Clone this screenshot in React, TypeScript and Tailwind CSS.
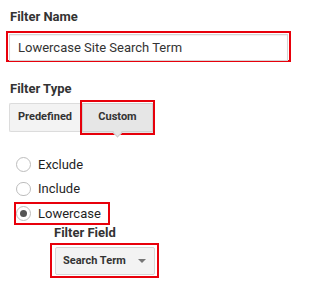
import { useState } from "react";

const types = ["Exclude", "Include", "Lowercase"];

export default function App() {
  const [kind, setKind] = useState("Lowercase");

  return (
    <div className="w-[310px] h-[286px] bg-white overflow-hidden font-['Roboto',sans-serif] text-[#333]">
      <div className="pt-[9px] pl-[10px] text-[13px] font-bold leading-[16px]">Filter Name</div>

      {/* name field */}
      <div className="mt-[6px] ml-[6px] w-[285px] h-[31px] border-2 border-[#e8000b] p-px">
        <input
          readOnly
          value="Lowercase Site Search Term"
          className="w-[279px] h-[27px] border border-[#d4d4d4] pl-[8px] font-['Roboto',sans-serif] text-[13px] text-[#333] outline-none shadow-[inset_0_1px_1px_rgba(0,0,0,0.06)]"
        />
      </div>

      <div className="mt-[19px] pl-[10px] text-[13px] font-bold leading-[16px]">Filter Type</div>

      {/* type switch */}
      <div className="mt-[3px] ml-[9px] flex items-start">
        <button className="w-[71px] h-[29px] mt-[3px] bg-[#f3f3f3] border border-[#dcdcdc] border-r-0 text-[11px] font-bold text-[#333] rounded-l-[2px]">
          Predefined
        </button>
        <div className="relative border-2 border-[#e8000b] w-[75px] h-[35px] pt-px">
          <button className="w-[71px] h-[29px] bg-[#e6e6e6] border border-[#cfcfcf] text-[11px] font-bold text-[#333] shadow-[0_1px_1px_rgba(0,0,0,0.1)]">
            Custom
          </button>
          <div className="absolute left-[32px] top-[27px] w-[7px] h-[7px] bg-[#e6e6e6] border-r border-b border-[#cfcfcf] rotate-45" />
        </div>
      </div>

      {/* radios */}
      <div className="mt-[18px] ml-[14px] flex flex-col gap-[1.5px]">
        {types.map((t) => {
          const on = kind === t;
          return (
            <label
              key={t}
              onClick={() => setKind(t)}
              className={`flex items-center h-[23px] w-[96px] border-2 ${on ? "border-[#e8000b]" : "border-transparent"}`}
            >
              <span className="w-[14.5px] h-[14.5px] rounded-full border border-[#bdbdbd] flex items-center justify-center">
                {on && <span className="w-[7px] h-[7px] rounded-full bg-[#555]" />}
              </span>
              <span className="ml-[7.5px] text-[13px] text-[#1f1f1f]">{t}</span>
            </label>
          );
        })}
      </div>

      <div className="pl-[54px] text-[13px] font-bold leading-[16px]">Filter Field</div>

      {/* field dropdown */}
      <div className="mt-[2px] ml-[50px] w-[109px] h-[35px] border-2 border-[#e8000b] pt-[2px] pl-[3px]">
        <button className="w-[100px] h-[28px] bg-[#f3f3f3] border border-[#d6d6d6] rounded-[2px] flex items-center justify-between pl-[7px] pr-[8px] text-[11px] font-bold text-[#333]">
          Search Term
          <span className="w-0 h-0 border-l-[4px] border-r-[4px] border-t-[4px] border-l-transparent border-r-transparent border-t-[#777]" />
        </button>
      </div>
    </div>
  );
}
